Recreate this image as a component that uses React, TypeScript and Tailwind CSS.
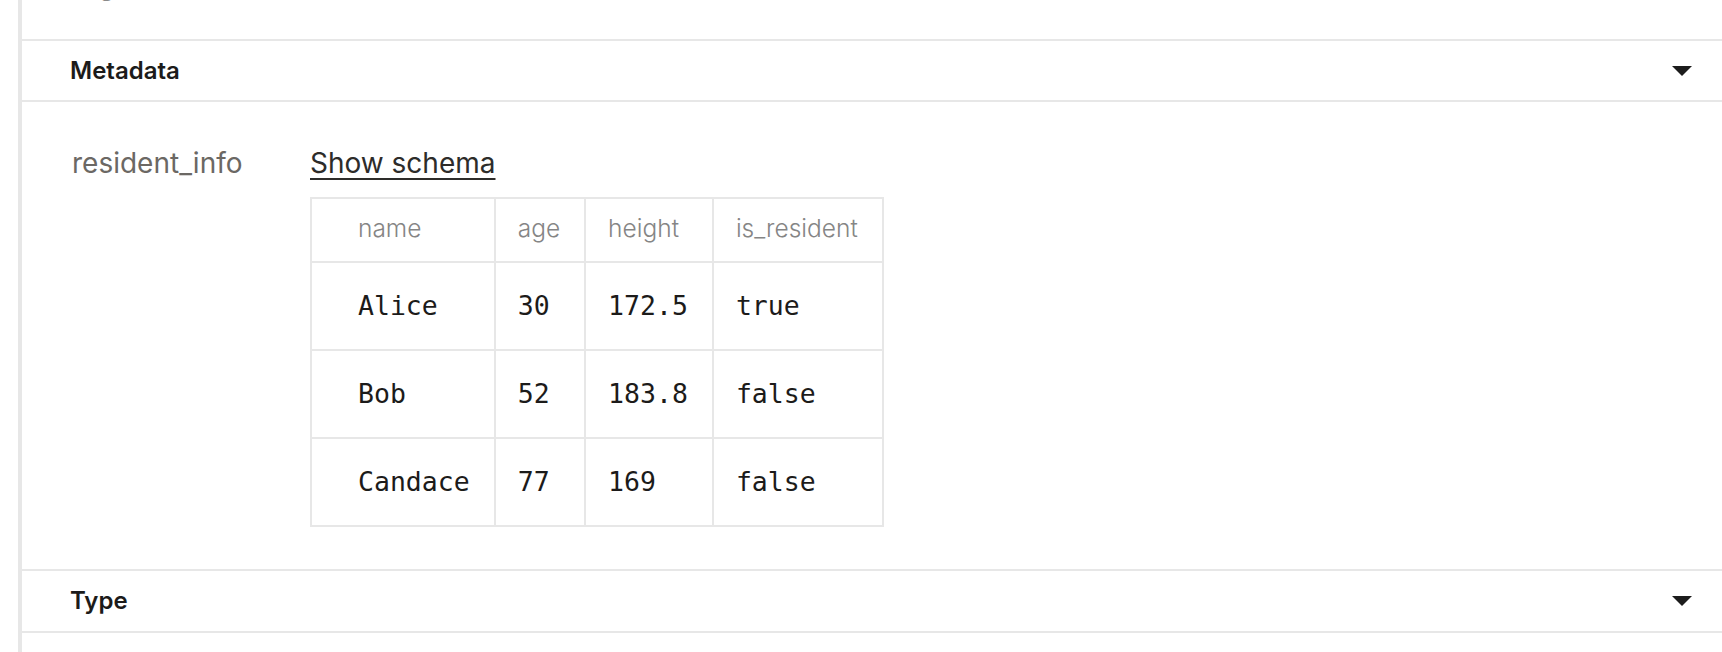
import { ReactNode } from "react";

type Row = {
  name: string;
  age: string;
  height: string;
  isResident: string;
};

const ROWS: Row[] = [
  { name: "Alice", age: "30", height: "172.5", isResident: "true" },
  { name: "Bob", age: "52", height: "183.8", isResident: "false" },
  { name: "Candace", age: "77", height: "169", isResident: "false" },
];

function Caret() {
  return (
    <svg width="20" height="10" viewBox="0 0 20 10" className="block">
      <path d="M0 0 L20 0 L10 10 Z" fill="#1c1c1c" />
    </svg>
  );
}

function SectionHeader({ title, className }: { title: string; className?: string }) {
  return (
    <div
      className={
        "flex items-center justify-between border-y-2 border-[#e7e7e7] pl-[48px] pr-[30px] " +
        (className ?? "")
      }
    >
      <span className="text-[24px] font-semibold text-[#1c1b1a]">{title}</span>
      <Caret />
    </div>
  );
}

function Th({ children, first }: { children: ReactNode; first?: boolean }) {
  return (
    <th
      className={
        "h-[64px] border-2 border-[#e7e7e7] pb-[4px] pr-[24px] text-left align-middle text-[24.5px] font-light text-[#858585] " +
        (first ? "pl-[46px]" : "pl-[22px]")
      }
    >
      {children}
    </th>
  );
}

function Td({ children, first }: { children: ReactNode; first?: boolean }) {
  return (
    <td
      className={
        "h-[88px] border-2 border-[#e7e7e7] pr-[24px] text-left align-middle text-[26.5px] text-[#1c1b1a] " +
        (first ? "pl-[46px]" : "pl-[22px]")
      }
      style={{ fontFamily: '"DejaVu Sans Mono", "Liberation Mono", monospace' }}
    >
      {children}
    </td>
  );
}

export default function App() {
  return (
    <div
      className="flex min-h-[652px] w-full bg-white"
      style={{ fontFamily: 'Inter, "Noto Sans", sans-serif' }}
    >
      <div className="w-[18px] shrink-0" />
      <div className="w-[4px] shrink-0 bg-[#e7e7e7]" />
      <div className="flex-1">
        {/* tail of the previous block, scrolled mostly out of view */}
        <div className="h-[39px] overflow-hidden pl-[50px]">
          <div className="-mt-[28px] text-[24px] leading-[32px] text-[#8a8a8a]">Tag</div>
        </div>

        <SectionHeader title="Metadata" className="h-[63px]" />

        <div className="flex pb-[42px] pl-[50px] pt-[44px]">
          <div className="w-[238px] shrink-0 text-[28px] leading-[34px] text-[#6b6864]">
            resident_info
          </div>
          <div className="flex flex-col gap-[17px]">
            <a className="w-fit text-[28px] leading-[34px] text-[#2d2c2a] underline decoration-[2px] underline-offset-[5px]">
              Show schema
            </a>
            <table className="border-collapse border-2 border-[#e7e7e7]">
              <thead>
                <tr>
                  <Th first>name</Th>
                  <Th>age</Th>
                  <Th>height</Th>
                  <Th>is_resident</Th>
                </tr>
              </thead>
              <tbody>
                {ROWS.map((row) => (
                  <tr key={row.name}>
                    <Td first>{row.name}</Td>
                    <Td>{row.age}</Td>
                    <Td>{row.height}</Td>
                    <Td>{row.isResident}</Td>
                  </tr>
                ))}
              </tbody>
            </table>
          </div>
        </div>

        <SectionHeader title="Type" className="h-[64px]" />
      </div>
    </div>
  );
}
